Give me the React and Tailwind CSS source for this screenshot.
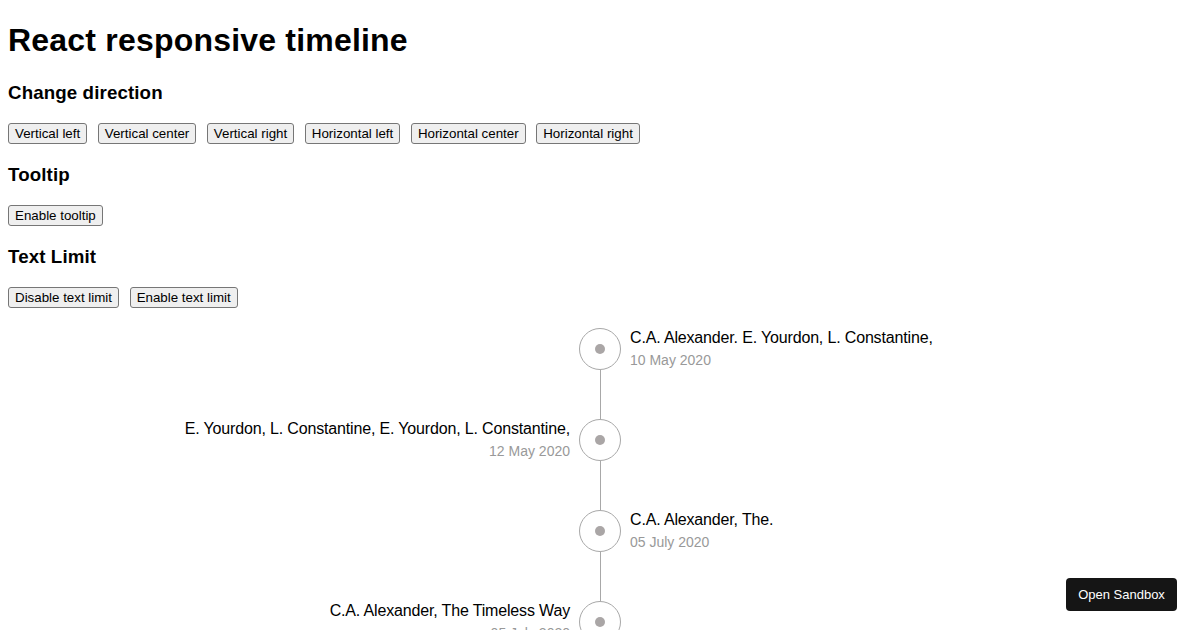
import React from "react";

const items = [
  { side: "right", title: "C.A. Alexander. E. Yourdon, L. Constantine,", date: "10 May 2020" },
  { side: "left", title: "E. Yourdon, L. Constantine, E. Yourdon, L. Constantine,", date: "12 May 2020" },
  { side: "right", title: "C.A. Alexander, The.", date: "05 July 2020" },
  { side: "left", title: "C.A. Alexander, The Timeless Way", date: "05 July 2020" },
];

const Btn = ({ children }) => (
  <button className="h-[21px] px-[6px] flex items-center border border-[#767676] bg-[#efefef] rounded-[3px] text-[13.33px] text-black leading-none">
    {children}
  </button>
);

const Section = ({ title, mt, buttons }) => (
  <>
    <h3 className={`${mt} text-[18.72px] leading-[21.5px] font-bold tracking-[0.12px]`}>{title}</h3>
    <div className="mt-[19.7px] flex gap-[10.6px]">
      {buttons.map((b) => (
        <Btn key={b}>{b}</Btn>
      ))}
    </div>
  </>
);

const Entry = ({ item, align }) => (
  <div className={align === "left" ? "text-right" : "text-left"}>
    <div className="text-[16px] leading-[18px] text-black pt-[1px] tracking-[-0.16px]">{item.title}</div>
    <div className="mt-[5px] text-[14px] leading-[16px] text-[#999]">{item.date}</div>
  </div>
);

export default function App() {
  return (
    <div className="px-[8px] min-h-[630px] overflow-hidden text-black font-['Liberation_Sans',Arial,sans-serif]">
      <h1 className="pt-[21.5px] text-[32px] leading-[37px] font-bold tracking-[0.2px]">React responsive timeline</h1>

      <Section
        title="Change direction"
        mt="mt-[23.3px]"
        buttons={["Vertical left", "Vertical center", "Vertical right", "Horizontal left", "Horizontal center", "Horizontal right"]}
      />
      <Section title="Tooltip" mt="mt-[19.8px]" buttons={["Enable tooltip"]} />
      <Section title="Text Limit" mt="mt-[20.2px]" buttons={["Disable text limit", "Enable text limit"]} />

      <div className="mt-[19.6px]">
        {items.map((item, i) => (
          <div key={i} className="grid grid-cols-[1fr_42px_1fr] gap-x-[9px] h-[91px]">
            <div>{item.side === "left" && <Entry item={item} align="left" />}</div>
            <div className="flex flex-col items-center">
              <div className="w-[42px] h-[42px] shrink-0 rounded-full border border-[#a8a8a8] flex items-center justify-center bg-white">
                <div className="w-[10px] h-[10px] rounded-full bg-[#aaa6a6]" />
              </div>
              <div className="w-px flex-1 bg-[#a8a8a8]" />
            </div>
            <div>{item.side === "right" && <Entry item={item} align="right" />}</div>
          </div>
        ))}
      </div>

      <button className="fixed right-[23px] bottom-[19px] w-[111px] h-[33px] rounded-[4px] bg-[#151515] text-white text-[13px] flex items-center justify-center">
        Open Sandbox
      </button>
    </div>
  );
}
